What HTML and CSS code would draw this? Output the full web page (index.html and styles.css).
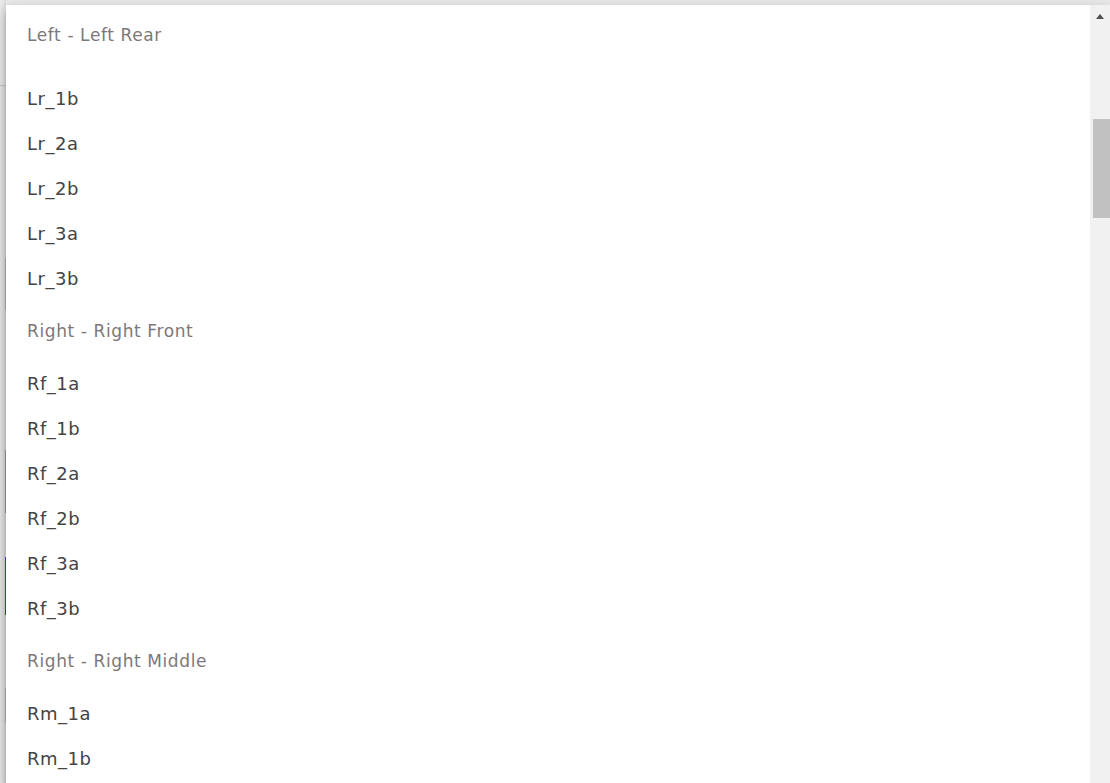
FILE: index.html
```html
<!DOCTYPE html>
<html>
<head>
<meta charset="utf-8">
<link rel="stylesheet" href="styles.css">
</head>
<body>
<div class="page">
  <div class="under">
    <div class="under-top"></div>
    <div class="under-gap g1"></div>
    <div class="under-line grey h52"></div>
    <div class="under-gap g2"></div>
    <div class="under-line dark h63"></div>
    <div class="under-gap g3"></div>
    <div class="under-line blue h58"></div>
    <div class="under-gap g4"></div>
    <div class="under-line grey h35"></div>
  </div>
  <div class="menu">
    <ul class="list">
      <li class="subheader">Left - Left Rear</li>
      <li class="spacer"></li>
      <li class="item">Lr_1b</li>
      <li class="item">Lr_2a</li>
      <li class="item">Lr_2b</li>
      <li class="item">Lr_3a</li>
      <li class="item">Lr_3b</li>
      <li class="subheader">Right - Right Front</li>
      <li class="item">Rf_1a</li>
      <li class="item">Rf_1b</li>
      <li class="item">Rf_2a</li>
      <li class="item">Rf_2b</li>
      <li class="item">Rf_3a</li>
      <li class="item">Rf_3b</li>
      <li class="subheader">Right - Right Middle</li>
      <li class="item">Rm_1a</li>
      <li class="item">Rm_1b</li>
    </ul>
    <div class="scrollbar">
      <div class="arrow"></div>
      <div class="thumb"></div>
    </div>
  </div>
</div>
</body>
</html>
```
FILE: styles.css
```css
html, body {
  margin: 0;
  padding: 0;
  height: 783px;
  overflow: hidden;
}
body {
  background: #ebebeb;
  font-family: "DejaVu Sans", "Noto Sans", sans-serif;
}
.page {
  display: flex;
  height: 783px;
}
.under {
  width: 6px;
  flex: none;
  display: flex;
  flex-direction: column;
  align-items: flex-end;
  background: linear-gradient(to right, #ececec 0, #e2e2e2 60%, #d6d6d6 100%);
}
.under-top {
  align-self: stretch;
  height: 85px;
  flex: none;
  background: linear-gradient(to right, #ededed 0, #e6e6e6 60%, #dcdcdc 100%);
  border-bottom: 1px solid #c9c9c9;
}
.under-gap { flex: none; }
.g1 { height: 172px; }
.g2 { height: 140px; }
.g3 { height: 44px; }
.g4 { height: 73px; }
.under-line { width: 1px; flex: none; }
.grey { background: #b5b5b5; }
.dark { background: #9a9a9a; }
.blue { background: #3f51b5; }
.h52 { height: 52px; }
.h63 { height: 63px; }
.h58 { height: 58px; }
.h35 { height: 35px; }

.menu {
  flex: 1;
  margin-top: 5px;
  background: #fff;
  display: flex;
  box-shadow: 0 5px 5px -3px rgba(0,0,0,0.2), 0 8px 10px 1px rgba(0,0,0,0.14), 0 3px 14px 2px rgba(0,0,0,0.12);
  overflow: hidden;
}
.list {
  list-style: none;
  margin: 0;
  padding: 0;
  flex: 1;
  overflow: hidden;
}
.subheader {
  height: 60px;
  display: flex;
  align-items: center;
  padding-left: 21px;
  font-size: 17px;
  color: #7d7777;
  letter-spacing: 0.6px;
  background: #fff;
}
.spacer { height: 10.5px; }
.item {
  height: 45px;
  display: flex;
  align-items: center;
  padding-left: 21px;
  font-size: 18px;
  letter-spacing: 0.5px;
  color: #444;
}
.scrollbar {
  width: 20px;
  flex: none;
  background: #f1f1f1;
  display: flex;
  flex-direction: column;
  align-items: center;
}
.arrow {
  margin-top: 9px;
  width: 0;
  height: 0;
  border-left: 4.5px solid transparent;
  border-right: 4.5px solid transparent;
  border-bottom: 5px solid #505050;
}
.thumb {
  margin-top: 100px;
  width: 17px;
  margin-left: 2px;
  height: 99px;
  background: #c1c1c1;
}
```
